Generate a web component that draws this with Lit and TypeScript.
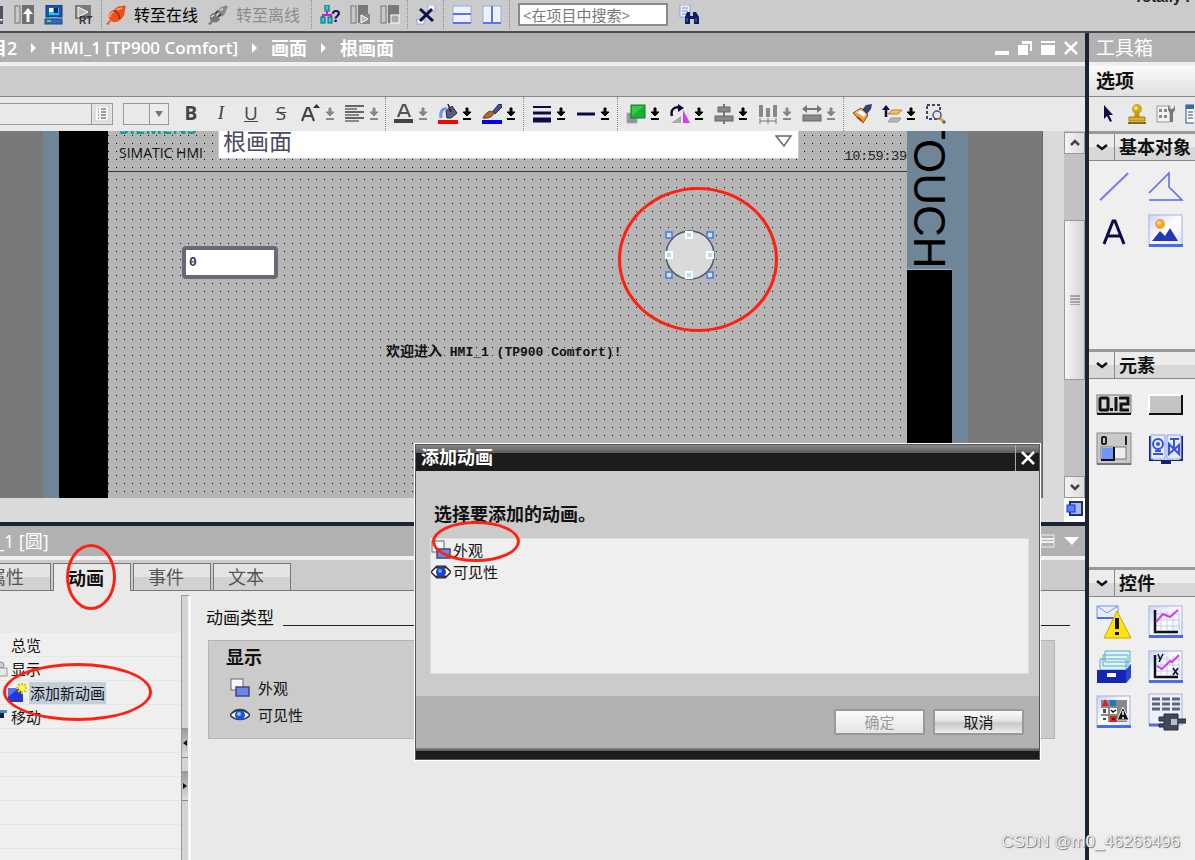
import { LitElement, html, svg, css, TemplateResult, SVGTemplateResult } from "lit";
import { customElement, property } from "lit/decorators.js";

/* ---------- icon library: every glyph is drawn in its own pixel box ---------- */
type Glyph = { w: number; h: number; art: SVGTemplateResult };
const g = (w: number, h: number, art: SVGTemplateResult): Glyph => ({ w, h, art });

const frameDefs = svg`<defs><linearGradient id="frameFill" x1="0" y1="0" x2="1" y2="1"><stop offset="0" stop-color="#c9d4fb"/><stop offset=".5" stop-color="#fff"/><stop offset="1" stop-color="#dfe6ff"/></linearGradient></defs>`;
const frame = svg`${frameDefs}<rect x="1" y="1" width="33" height="31" fill="url(#frameFill)" stroke="#a9b2dc"/><rect x="1" y="30" width="34" height="3" fill="#4f6be0"/>`;
const gridLines = svg`<path d="M13 6V25M19 6V25M25 6V25M31 6V25M7 9H32M7 15H32M7 21H32" stroke="#c3cde8"/>`;

const icons: Record<string, Glyph> = {
  sliver: g(4, 20, svg`<path d="M0 1H3V19H0Z" fill="#4a5568"/><path d="M0 14H3L1 17Z" fill="#fff"/>`),
  upload: g(20, 20, svg`<rect x="1" y="1" width="5" height="17" fill="#c8c8c8" stroke="#777"/><rect x="8" y="0" width="12" height="19" fill="#707070"/><path d="M14 3L19 9H15.500V17H12.500V9H9Z" fill="#fff"/>`),
  station: g(20, 20, svg`<rect x="2" y="0" width="16" height="12" fill="#1857b8" stroke="#123a78"/><rect x="5" y="3" width="10" height="7" fill="#18c8e8"/><rect x="5" y="3" width="4" height="4" fill="#fff"/><rect x="10" y="3" width="4" height="5" fill="#0a2470"/><rect x="6" y="12" width="8" height="2" fill="#9ab"/><rect x="1" y="14" width="17" height="5" fill="#2c68c4" stroke="#234a80"/><path d="M3 16H7" stroke="#3fe060" stroke-width="2"/>`),
  rt: g(20, 20, svg`<rect x="1" y="0" width="16" height="14" fill="#7a7a7a"/><path d="M4 2L14 7L4 12Z" fill="#b9b9b9" stroke="#fff"/><text x="5" y="19" font-family="Liberation Sans" font-weight="bold" font-size="10" fill="#333">RT</text>`),
  plug: g(20, 20, svg`<path d="M0 19L4 15C1 10 4 6 8 5L10 3C13 0 17 2 18 0L20 2C18 4 20 9 17 12L14 15C10 18 7 17 5 16L2 20Z" fill="#f0501c"/><path d="M7 6C10 6 13 9 14 14" fill="none" stroke="#a32808" stroke-width="1.500"/><path d="M4 12C4 9 6 7 8 7M11 5C13 3 15 4 16 3" fill="none" stroke="#ffb080" stroke-width="1.500"/>`),
  unplug: g(20, 20, svg`<path d="M0 19L3 16C0 12 3 8 6 8L12 14C11 17 7 18 5 17L2 20Z" fill="#777"/><path d="M9 6L12 3C14 1 17 2 18 0L20 2C18 4 18 8 16 10L14 12Z" fill="#8a8a8a"/><path d="M7 9L10 6M10 12L13 9" stroke="#444" stroke-width="2"/><path d="M3 12L6 10M12 5L15 4" stroke="#ddd" stroke-width="1.500"/>`),
  topology: g(20, 20, svg`<rect x="5" y="0" width="4" height="6" fill="#19d5d5" stroke="#067"/><path d="M7 6V10M3 13V10H11V13" fill="none" stroke="#c020d8" stroke-width="2"/><rect x="1" y="12" width="4" height="6" fill="#19d5d5" stroke="#067"/><rect x="8" y="12" width="4" height="6" fill="#19d5d5" stroke="#067"/><text x="11" y="17" font-family="Liberation Sans" font-weight="bold" font-size="16" fill="#101060">?</text>`),
  startSim: g(20, 20, svg`<rect x="1" y="1" width="5" height="17" fill="#c8c8c8" stroke="#777"/><rect x="8" y="0" width="10" height="18" fill="#7a7a7a"/><rect x="10" y="9" width="10" height="10" fill="#888"/><path d="M11 10L18 14L11 18Z" fill="#bbb" stroke="#fff"/>`),
  stopSim: g(20, 20, svg`<rect x="1" y="1" width="5" height="17" fill="#c8c8c8" stroke="#777"/><rect x="8" y="0" width="11" height="18" fill="#7a7a7a"/><rect x="11" y="10" width="8" height="8" fill="#aaa" stroke="#fff"/>`),
  crossRef: g(20, 20, svg`<rect x="12" y="0" width="7" height="6" fill="#fff" stroke="#8fa0e8"/><rect x="1" y="14" width="7" height="5" fill="#fff" stroke="#8fa0e8"/><path d="M4 4L17 16M16 4L4 16" stroke="#0b0b4a" stroke-width="3"/>`),
  splitH: g(20, 20, svg`<rect x="1" y="1" width="18" height="17" fill="#eef2ff" stroke="#9aa8ea"/><path d="M1 9H19M1 18H19" stroke="#5e73e8" stroke-width="2"/>`),
  splitV: g(20, 20, svg`<rect x="1" y="1" width="18" height="17" fill="#eef2ff" stroke="#9aa8ea"/><path d="M10 1V18M1 18H19" stroke="#5e73e8" stroke-width="2"/>`),
  find: g(20, 20, svg`<rect x="1" y="0" width="10" height="12" fill="#eef2ff" stroke="#8fa0e8"/><path d="M3 3H9M3 6H9M3 9H8" stroke="#7787cc"/><path d="M8 7H11V11H14V7H17L20 12V19H15V14H11V19H6V12Z" fill="#0d1c66"/><path d="M8 13V17M17 13V17" stroke="#5f77c8"/>`),
  listBox: g(16, 16, svg`<rect x="1" y="0" width="14" height="15" fill="#f8f8f8" stroke="#ccc"/><path d="M4 3H5M4 6H5M4 9H5M4 12H5M7 3H12M7 6H12M7 9H12M7 12H12" stroke="#444"/>`),
  fontSize: g(20, 20, svg`<path d="M1 17L6 4H8L13 17M3 12H11" fill="none" stroke="#444" stroke-width="2.200"/><path d="M12 4H19L15.500 0Z" fill="#333"/>`),
  align: g(20, 20, svg`<path d="M0 2H19M0 8H19M0 14H19" stroke="#666" stroke-width="2"/><path d="M0 5H12M0 11H14M0 17H14" stroke="#888" stroke-width="2"/>`),
  fontColor: g(20, 20, svg`<path d="M4 13L9 1H11L16 13M6 9H14" fill="none" stroke="#555" stroke-width="2.200"/><rect x="0" y="15" width="19" height="4" fill="#444"/>`),
  fill: g(20, 20, svg`<path d="M8 7L14 2L19 9L13 14H9Z" fill="#556080" stroke="#20284c"/><path d="M10 0L13 8" stroke="#222" stroke-width="1.500"/><path d="M9 5C4 4 2 8 3 14" fill="none" stroke="#6f92ee" stroke-width="3"/><rect x="0" y="16" width="20" height="4" fill="#f00"/>`),
  brush: g(20, 20, svg`<path d="M11 7L17 0H20V3L13 10Z" fill="#46508a" stroke="#222a55"/><path d="M1 14C4 8 8 6 11 8C13 11 8 15 1 14Z" fill="#b06a2c" stroke="#6a3a12"/><rect x="0" y="16" width="20" height="4" fill="#00f"/>`),
  lineWidth: g(20, 20, svg`<path d="M1 3H19" stroke="#0b0b4a" stroke-width="2"/><path d="M1 9H19" stroke="#0b0b4a" stroke-width="3"/><path d="M1 16H19" stroke="#0b0b4a" stroke-width="5"/>`),
  lineStyle: g(20, 20, svg`<path d="M1 10H19" stroke="#0b0b4a" stroke-width="3"/>`),
  order: g(20, 20, svg`<rect x="1" y="9" width="10" height="10" fill="#8b949c" stroke="#aab"/><rect x="5" y="1" width="14" height="13" fill="#1fae35" stroke="#157a28"/><path d="M6 2H18L6 12Z" fill="#35cc45"/>`),
  rotate: g(20, 20, svg`<path d="M2 12C0 5 5 2 11 4" fill="none" stroke="#0b0b4a" stroke-width="2.500"/><path d="M8 0L14 4L8 8Z" fill="#0b0b4a"/><path d="M13 6V19H20Z" fill="#d83cf0"/><path d="M11 12V19H1Z" fill="#aaa"/>`),
  centre: g(20, 20, svg`<path d="M10 0V20" stroke="#777" stroke-width="2"/><rect x="4" y="3" width="12" height="5" fill="#888" stroke="#666"/><rect x="1" y="12" width="18" height="5" fill="#888" stroke="#666"/>`),
  spread: g(20, 20, svg`<path d="M3 1V13M10 4V13M17 1V13" stroke="#888" stroke-width="4"/><path d="M2 14V20M10 14V20M18 14V20M2 17H18" stroke="#777"/>`),
  sameWidth: g(20, 20, svg`<path d="M3 5H17" stroke="#777" stroke-width="2"/><path d="M0 5L5 1V9ZM20 5L15 1V9Z" fill="#777"/><rect x="1" y="11" width="18" height="6" fill="#888" stroke="#666"/>`),
  painter: g(20, 20, svg`<path d="M10 6L14 1L20 0L19 5L15 10Z" fill="#33407a"/><path d="M1 9L9 4L16 11L11 19Z" fill="#f5a528" stroke="#8a4a10"/><path d="M4 8L9 6L14 10L12 13Z" fill="#fff" stroke="#ccc"/><path d="M5 13L10 17" stroke="#c03a08" stroke-width="2"/>`),
  layer: g(20, 20, svg`<path d="M4 13V4" stroke="#0b0b4a" stroke-width="2.500"/><path d="M0 6L4 1L8 6Z" fill="#0b0b4a"/><path d="M10 6H20L16 10H6Z" fill="#f3c05a" stroke="#b98324"/><path d="M9 14H19L16 18H6Z" fill="#b3b8bf" stroke="#999"/>`),
  zoomSel: g(20, 20, svg`<rect x="1" y="1" width="13" height="14" fill="none" stroke="#0b0b4a" stroke-dasharray="3 2" stroke-width="1.500"/><circle cx="11" cy="11" r="4" fill="#dfe8f4" stroke="#556" stroke-width="1.500"/><path d="M14 14L17 17" stroke="#e0a818" stroke-width="3"/><path d="M17 17L19 19" stroke="#2f5fae" stroke-width="3"/>`),
  minimise: g(16, 16, svg`<rect x="1" y="11" width="14" height="4" fill="#fff"/>`),
  restore: g(16, 16, svg`<path d="M5 1H15V11H13V4H5Z" fill="#fff"/><rect x="1" y="5" width="10" height="10" fill="#fff"/>`),
  maximise: g(16, 16, svg`<path d="M1 1H15V3H1ZM1 5H15V15H1Z" fill="#fff"/>`),
  close: g(16, 16, svg`<path d="M2 2L14 14M14 2L2 14" stroke="#fff" stroke-width="2.500"/>`),
  cursor: g(20, 20, svg`<path d="M6 1V15L9 12L12 18L14 17L11 11H15Z" fill="#0b0b4a"/>`),
  stamp: g(20, 20, svg`<circle cx="10" cy="5" r="5" fill="#d3a91c"/><path d="M8 8H12L13 13H7Z" fill="#c49812"/><path d="M2 13H18V17H2Z" fill="#dcb42a" stroke="#a47e0a"/><path d="M1 19H19" stroke="#8a6a08" stroke-width="2"/><circle cx="9" cy="4" r="2" fill="#f5df7a"/>`),
  settings: g(20, 20, svg`<rect x="1" y="2" width="13" height="16" fill="#f2f2f2" stroke="#999"/><path d="M3 5H6V8H3ZM8 5H11V8H8ZM3 11H6V14H3ZM8 11H11V14H8Z" fill="#888"/><path d="M12 1L14 5H17L19 1V6L17 9V18H14V9L12 6Z" fill="#777"/>`),
  panel: g(9, 20, svg`<rect x="1" y="1" width="18" height="18" fill="#fff" stroke="#2c4f9c"/><rect x="1" y="1" width="18" height="4" fill="#2f6bc0"/><path d="M3 8H8M3 11H8M3 14H8" stroke="#345"/>`),
  chevron: g(16, 16, svg`<path d="M3 6L8 10L13 6" fill="none" stroke="#111" stroke-width="2.500"/>`),
  line: g(36, 34, svg`<path d="M5 32L33 5" stroke="#bbb"/><path d="M4 31L32 4" stroke="#5468ee" stroke-width="1.500"/>`),
  polygon: g(36, 34, svg`<path d="M1 24L21 4V18L34 31H1" fill="none" stroke="#5468ee" stroke-width="1.500"/>`),
  textA: g(36, 34, svg`<path d="M8 30L17 7H19L28 30M12 22H24" fill="none" stroke="#0b0b4a" stroke-width="3"/>`),
  picture: g(36, 34, svg`${frame}<circle cx="12" cy="10" r="5" fill="#f6a623"/><circle cx="11" cy="9" r="2" fill="#fdd68a"/><path d="M4 27L12 17L17 22L22 14L30 27Z" fill="#2138b8"/>`),
  ioField: g(36, 34, svg`<rect x="1" y="8" width="34" height="18" fill="#d6d6d6" stroke="#777"/><path d="M1 27H35" stroke="#111" stroke-width="2"/><rect x="4" y="11" width="8" height="12" rx="1" fill="none" stroke="#111" stroke-width="3"/><path d="M20 10V24M23 11H32V17H25V23H33" fill="none" stroke="#111" stroke-width="3"/><rect x="14" y="21" width="3" height="3" fill="#111"/>`),
  button: g(36, 34, svg`<rect x="1" y="8" width="34" height="19" fill="#c4c4c4"/><path d="M1 27V8H35" fill="none" stroke="#fff" stroke-width="2"/><path d="M1 27H34V8" fill="none" stroke="#111" stroke-width="2"/>`),
  switchBtn: g(36, 34, svg`<rect x="1" y="1" width="34" height="31" fill="#c9c9c9" stroke="#888"/><path d="M1 32H35" stroke="#777" stroke-width="2"/><rect x="6" y="5" width="4" height="7" rx="1" fill="none" stroke="#222" stroke-width="2"/><path d="M30 4V13" stroke="#222" stroke-width="2"/><rect x="5" y="15" width="25" height="12" fill="#eee" stroke="#777"/><rect x="6" y="16" width="11" height="11" fill="#6f96ff"/><path d="M18 15V28H5" fill="none" stroke="#111" stroke-width="2"/>`),
  library: g(36, 34, svg`<path d="M1 4H5V28H31V4H35V29H23V32H13V29H1Z" fill="#14246e"/><path d="M3 3H17V27H3ZM19 3H33V27H19Z" fill="#e6ecff" stroke="#8ea0f0"/><circle cx="10" cy="12" r="5" fill="none" stroke="#3454e0" stroke-width="2"/><circle cx="10" cy="12" r="2" fill="#3454e0"/><path d="M5 22H15M7 19H13M22 7H31M26 7V16M21 12V22L31 13V22Z" fill="none" stroke="#3454e0" stroke-width="2"/>`),
  alarm: g(36, 34, svg`<rect x="1" y="1" width="21" height="12" fill="#e9eeff" stroke="#7d92e6"/><path d="M1 1L11 8L22 1" fill="none" stroke="#7d92e6"/><path d="M1 13H22" stroke="#4f6be0" stroke-width="2"/><path d="M21 6L35 33H8Z" fill="#ffe600" stroke="#c8a800"/><path d="M21 13V24M21 27V30" stroke="#111" stroke-width="4"/>`),
  trend: g(36, 34, svg`${frame}${gridLines}<path d="M7 5V27H30" fill="none" stroke="#111" stroke-width="2.500"/><path d="M8 17L15 9L22 12L30 5" fill="none" stroke="#d63be8" stroke-width="2"/>`),
  recipe: g(36, 34, svg`<path d="M9 1H34V12H9ZM7 5H32V16H7ZM4 9H30V20H4Z" fill="#dff3fa" stroke="#5fa9c8"/><path d="M1 20H30L35 14V27L30 33H1Z" fill="#1726b0"/><path d="M30 20L35 14V27L30 33Z" fill="#2f43dc"/><rect x="11" y="23" width="9" height="4" fill="#fff"/>`),
  xyTrend: g(36, 34, svg`${frame}${gridLines}<path d="M7 5V27H30" fill="none" stroke="#111" stroke-width="2.500"/><path d="M9 16L14 19L22 11L24 12L31 5" fill="none" stroke="#d63be8" stroke-width="2"/><path d="M10 4L12 9M15 4L11 12M25 18L30 25M30 18L25 25" stroke="#111" stroke-width="1.500"/>`),
  html: g(36, 34, svg`${frame}<rect x="5" y="5" width="26" height="22" fill="#888"/><path d="M6 11L9 4L13 11Z" fill="#e02020"/><rect x="14" y="5" width="6" height="6" fill="#1878c8"/><rect x="5" y="13" width="7" height="6" fill="#fff"/><rect x="14" y="13" width="7" height="6" fill="#fff"/><rect x="5" y="21" width="7" height="6" fill="#fff"/><rect x="14" y="21" width="7" height="6" fill="#e02020"/><path d="M7 15H10M7 17H10M15 15L17 17L20 15M7 24H10M16 24H19" fill="none" stroke="#111" stroke-width="1.500"/><path d="M27 12L33 25H21Z" fill="#111" stroke="#eee"/><path d="M27 16V20M27 22V24" stroke="#fff" stroke-width="1.500"/>`),
  system: g(38, 38, svg`<rect x="1" y="1" width="33" height="31" fill="#edf1ff" stroke="#a9b2dc"/><path d="M1 32H20" stroke="#4f6be0" stroke-width="3"/><path d="M4 6H32M4 11H32M4 16H32" stroke="#5b6478" stroke-width="3" stroke-dasharray="8 2"/><path d="M11 24H16V21H30V26H38V30H30V37H16V34H11V31H16V28H11Z" fill="#414a5a" stroke="#242b38"/><rect x="23" y="26" width="6" height="6" fill="#b9bfc9"/>`),
  appearance: g(20, 20, svg`<rect x="1" y="1" width="12" height="11" fill="#f6f8ff" stroke="#666"/><rect x="6" y="9" width="13" height="9" fill="#6b84f4" stroke="#444b66" stroke-width="1.500"/>`),
  eye: g(20, 20, svg`<path d="M0 10C5 4 15 4 20 10C15 16 5 16 0 10Z" fill="#fff" stroke="#333a55" stroke-width="1.500"/><circle cx="10" cy="10" r="5" fill="#2350d8"/><circle cx="9" cy="9" r="2" fill="#7fd0ff"/><path d="M3 7C7 4 13 4 17 7" fill="none" stroke="#333a55" stroke-width="2"/>`),
  eyeBold: g(20, 20, svg`<path d="M0 10L5 5H15L20 10L15 15H5Z" fill="#fff" stroke="#222" stroke-width="1.500"/><path d="M5 5H15M5 15H15" stroke="#333" stroke-width="3"/><circle cx="10" cy="10" r="5" fill="#2040c8"/><circle cx="9" cy="9" r="2" fill="#4fb0ff"/>`),
  newItem: g(20, 20, svg`<rect x="1" y="5" width="15" height="14" fill="#2438d8"/><path d="M1 5H12L1 14Z" fill="#5a74f8"/><path d="M15 0V11M9 5H20M11 1L19 9M19 1L11 9" stroke="#d8c800" stroke-width="2"/><circle cx="15" cy="5" r="3" fill="#fff85a"/>`),
  group: g(8, 20, svg`<circle cx="1" cy="6" r="3" fill="#ccd" stroke="#88a"/><rect x="-4" y="9" width="11" height="8" fill="#e8e8e8" stroke="#999"/>`),
  move: g(8, 20, svg`<rect x="0" y="3" width="7" height="3" fill="#3f8fb8"/><path d="M0 6H4V11H0Z" fill="#0b1c50"/>`),
  layout: g(20, 20, svg`<rect x="6" y="2" width="12" height="13" fill="#a9b9e0" stroke="#1c2f80" stroke-width="2"/><rect x="3" y="5" width="8" height="7" fill="#5b80ff" stroke="#1030e0"/>`),
  scrollUp: g(16, 16, svg`<path d="M4 10L8 6L12 10" fill="none" stroke="#444" stroke-width="2.500"/>`),
  scrollDown: g(16, 16, svg`<path d="M4 6L8 10L12 6" fill="none" stroke="#444" stroke-width="2.500"/>`),
  rows: g(16, 16, svg`<rect x="1" y="2" width="13" height="12" fill="none" stroke="#eee"/><path d="M1 6H14M1 9H14" stroke="#eee" stroke-width="2"/>`),
  triangle: g(16, 16, svg`<path d="M0 4H15L8 12Z" fill="#fff"/>`),
};

const icon = (name: string): TemplateResult => {
  const i = icons[name];
  return html`<svg width=${i.w} height=${i.h} viewBox="0 0 ${i.w} ${i.h}" aria-hidden="true">${i.art}</svg>`;
};

const shared = css`
  * { box-sizing: border-box; }
  svg { display: block; flex: none; }
  button { border: 0; padding: 0; margin: 0; background: none; font: inherit; color: inherit; display: flex; align-items: center; flex: none; }
  .group { display: flex; align-items: center; gap: 10px; height: 100%; padding: 0 7px 0 8px; flex: none; }
  .group + .group { border-left: 1px dotted #888; }
  .titlebar { height: 29px; background: #b1b1b1; color: #fff; display: flex; align-items: center; flex: none; white-space: nowrap; }
  .stripe { height: 4px; background: #f0f0f0; flex: none; }
`;

@customElement("top-toolbar")
class TopToolbar extends LitElement {
  static styles = [shared, css`
    :host { display: flex; height: 33px; background: #cbcbcb; border-bottom: 2px solid #4a4c5c; overflow: hidden; position: relative; font-size: 16px; padding-bottom: 2px; line-height: 24px; }
    .group:first-child { padding-left: 0; }
    .group.online { padding-left: 4px; padding-right: 11px; }
    .go { gap: 8px; }
    .off { color: #8c8c8c; }
    input { width: 150px; height: 23px; border: 2px solid #8a8a8a; background: #fff; padding: 0 3px; font: inherit; font-size: 15px; color: #777; }
    input::placeholder { color: #777; opacity: 1; }
    .search { gap: 11px; }
    .brand { position: absolute; right: 0; top: -12px; width: 61px; font: bold 15px/18px "Liberation Sans", sans-serif; white-space: nowrap; color: #222; }
  `];
  render() {
    const b = (n: string, label: string) => html`<button aria-label=${label}>${icon(n)}</button>`;
    return html`
      <div class="group">${icon("sliver")}${b("upload", "上传")}${b("station", "下载")}${b("rt", "启动 RT")}</div>
      <div class="group online"><button class="go">${icon("plug")}<span>转至在线</span></button><button class="go off" disabled>${icon("unplug")}<span>转至离线</span></button></div>
      <div class="group">${b("topology", "可访问设备")}${b("startSim", "启动")}${b("stopSim", "停止")}</div>
      <div class="group">${b("crossRef", "交叉引用")}</div>
      <div class="group">${b("splitH", "水平拆分")}${b("splitV", "垂直拆分")}</div>
      <div class="group search"><input type="text" aria-label="在项目中搜索" placeholder="<在项目中搜索>">${b("find", "搜索")}</div>
      <span class="brand">Totally I</span>`;
  }
}

@customElement("format-bar")
class FormatBar extends LitElement {
  static styles = [shared, css`
    :host { display: flex; height: 34px; background: #e9e9e9; flex: none; font-family: "Open Sans", sans-serif; }
    .group:first-child { padding-left: 0; padding-right: 6px; }
    .family { display: flex; width: 113px; height: 22px; border: 1px solid #999; border-left: 0; }
    .family input { flex: 1; min-width: 0; border: 0; border-right: 1px solid #999; background: #e9e9e9; padding: 0; }
    .family button { width: 20px; justify-content: center; background: #e4e4e4; }
    .size { width: 46px; height: 22px; appearance: none; border: 1px solid #999; border-radius: 0; background: linear-gradient(90deg, #999 1px, #ececec 1px) right / 19px 100% no-repeat; margin-right: 2px; }
    .sizewrap { position: relative; flex: none; display: flex; }
    .sizewrap svg { position: absolute; right: 8px; top: 8px; }
    .letter { width: 20px; height: 24px; justify-content: center; font-size: 19px; line-height: 22px; padding-bottom: 2px; color: #444; }
    .bold { font-weight: 700; }
    .italic { font-family: "Liberation Serif", serif; font-style: italic; }
    .under { text-decoration: underline; }
    .strike { text-decoration: line-through; }
    .pair { gap: 4px; }
    .dim { color: #888; }
  `];
  pair(name: string, label: string, dim = false) {
    return html`<button class="pair ${dim ? "dim" : ""}" aria-label=${label}>${icon(name)}<svg width="10" height="14" viewBox="0 0 10 14"><path d="M4 1H6V5H9L5 9L1 5H4Z" fill="currentColor" stroke="currentColor"/><path d="M1 12H9" stroke="currentColor" stroke-width="2"/></svg></button>`;
  }
  render() {
    return html`
      <div class="group">
        <div class="family"><input type="text" aria-label="字体"><button aria-label="选择字体">${icon("listBox")}</button></div>
        <div class="sizewrap"><select class="size" aria-label="字号"></select><svg width="8" height="6" viewBox="0 0 8 6"><path d="M0 0H8L4 6Z" fill="#777"/></svg></div>
        <button class="letter bold">B</button><button class="letter italic">I</button><button class="letter under">U</button><button class="letter strike">S</button>
        ${this.pair("fontSize", "字体大小", true)}${this.pair("align", "对齐", true)}
      </div>
      <div class="group">${this.pair("fontColor", "文本颜色", true)}${this.pair("fill", "背景色")}${this.pair("brush", "边框颜色")}</div>
      <div class="group">${this.pair("lineWidth", "线宽")}${this.pair("lineStyle", "线型")}</div>
      <div class="group">${this.pair("order", "次序")}${this.pair("rotate", "旋转")}${this.pair("centre", "居中")}${this.pair("spread", "分布", true)}${this.pair("sameWidth", "等宽", true)}</div>
      <div class="group"><button aria-label="格式刷">${icon("painter")}</button>${this.pair("layer", "图层")}<button aria-label="缩放所选">${icon("zoomSel")}</button></div>`;
  }
}

@customElement("screen-editor")
class ScreenEditor extends LitElement {
  static styles = [shared, css`
    :host { display: flex; flex: 1; min-height: 0; background: #797979; overflow: hidden; }
    .desk { width: 43px; flex: none; }
    .edge { width: 16px; background: #6f8699; flex: none; }
    .bezel { width: 49px; background: #000; flex: none; }
    .bezel.right { width: 45px; position: relative; overflow: hidden; }
    .touch { position: absolute; left: 0; top: 0; width: 45px; height: 139px; background: #6f8699; border-bottom: 1px solid #9db0c0; writing-mode: vertical-rl; font: 44px/45px "Liberation Sans", sans-serif; white-space: nowrap; display: flex; justify-content: flex-end; color: #000; }
    .screen { flex: 1; background: #b5b5b5; position: relative; overflow: hidden; min-width: 0; }
    .grid { position: absolute; inset: 0; width: 100%; height: 100%; }
    .brand { position: absolute; left: 11px; top: -14px; font: bold 18px/20px "Open Sans", sans-serif; color: #0f9c9c; }
    .model { position: absolute; left: 11px; top: 12px; font: 14px/20px "Open Sans", sans-serif; color: #111; white-space: nowrap; }
    .title { position: absolute; left: 110px; right: 108px; top: -8px; height: 36px; background: #fff; border: 1px solid #c9c9d6; padding: 0 5px 0 4px; font-size: 23px; line-height: 24px; color: #4a4a60; display: flex; justify-content: space-between; align-items: center; white-space: nowrap; }
    .date { position: absolute; right: 2px; top: -11px; font: 13px/16px "Liberation Mono", monospace; color: #222; white-space: nowrap; }
    .time { position: absolute; right: 0; top: 18px; font: 13px/16px "Liberation Mono", monospace; color: #222; white-space: nowrap; }
    .io { position: absolute; left: 74px; top: 115px; width: 96px; height: 33px; border: 4px solid #686877; border-radius: 4px; background: #fff; padding: 0 3px; font: bold 13px/20px "Liberation Mono", monospace; color: #333350; }
    .welcome { position: absolute; left: 278px; top: 209px; font: bold 13px/20px "Liberation Mono", monospace; color: #111; white-space: nowrap; }
    .welcome .zh { font-family: "Noto Sans CJK SC", sans-serif; font-size: 14px; }
    .shape { position: absolute; left: 551px; top: 97px; }
    .ring { position: absolute; left: 510px; top: 56px; width: 160px; height: 145px; border: 3px solid #ff2010; border-radius: 50%; }
    .gap { width: 75px; flex: none; border-right: 1px solid #686868; }
    .side { width: 21px; background: #d9d9d9; flex: none; }
    .scroll { width: 21px; background: #c2c2c2; display: flex; flex-direction: column; flex: none; padding-top: 1px; }
    .scroll button { width: 21px; height: 22px; border: 1px solid #999; background: linear-gradient(90deg, #f4f4f4, #ddd); justify-content: center; }
    .scroll .up { flex: 67; display: block; }
    .thumb { flex: 160; border: 1px solid #999; background: linear-gradient(90deg, #f4f4f4, #d4d4d4); display: flex; align-items: center; justify-content: center; }
    .down { flex: 97; }
  `];
  render() {
    const corners = [[10, 7], [51, 7], [10, 47], [51, 47]];
    const mids = [[30, 7], [10, 27], [51, 27], [30, 47]];
    return html`
      <div class="desk"></div><div class="edge"></div><div class="bezel"></div>
      <div class="screen">
        <svg class="grid">
          <defs>
            <pattern id="dots" width="8" height="8" patternUnits="userSpaceOnUse"><rect width="1" height="1" fill="#111"/></pattern>
            <pattern id="headDots" y="4" width="8" height="8" patternUnits="userSpaceOnUse"><rect width="1" height="1" fill="#111"/></pattern>
          </defs>
          <rect width="100%" height="40" fill="url(#headDots)"/>
          <rect y="42" width="100%" height="100%" fill="url(#dots)"/>
          <rect y="40" width="100%" height="1" fill="#333"/>
        </svg>
        <span class="brand">SIEMENS</span>
        <span class="model">SIMATIC HMI</span>
        <div class="title"><span>根画面</span><svg width="18" height="12" viewBox="0 0 18 12"><path d="M1 1H16L9 11Z" fill="none" stroke="#686877" stroke-width="1.500"/></svg></div>
        <span class="date">2000/12/31</span>
        <span class="time">10:59:39</span>
        <input class="io" type="text" aria-label="I/O 域" value="0">
        <span class="welcome"><span class="zh">欢迎进入</span> HMI_1 (TP900 Comfort)!</span>
        <svg class="shape" width="62" height="56" viewBox="0 0 62 56">
          <circle cx="31" cy="27" r="24" fill="#dadada" stroke="#555566" stroke-width="1.500"/>
          ${corners.map(([x, y]) => svg`<rect x=${x - 3} y=${y - 3} width="6" height="6" fill="#bfe4fb" stroke="#4a78d0" stroke-width="1.500"/>`)}
          ${mids.map(([x, y]) => svg`<rect x=${x - 3} y=${y - 3} width="6" height="6" fill="#aee0fa" stroke="#fff" stroke-width="2"/>`)}
        </svg>
        <div class="ring"></div>
      </div>
      <div class="bezel right"><div class="touch">TOUCH</div></div>
      <div class="edge"></div><div class="gap"></div><div class="side"></div>
      <div class="scroll">
        <button aria-label="向上滚动">${icon("scrollUp")}</button><span class="up"></span>
        <div class="thumb"><svg width="10" height="10" viewBox="0 0 10 10"><path d="M0 1H10M0 4H10M0 7H10M0 10H10" stroke="#666"/></svg></div>
        <span class="down"></span><button aria-label="向下滚动">${icon("scrollDown")}</button>
      </div>`;
  }
}

@customElement("inspector-panel")
class InspectorPanel extends LitElement {
  static styles = [shared, css`
    :host { display: flex; flex-direction: column; height: 338px; flex: none; border-top: 4px solid #1c2333; background: #e9e9e9; }
    .titlebar { height: 30px; font-size: 18px; line-height: 28px; padding-right: 5px; gap: 8px; }
    .name { flex: 1; margin-left: -4px; }
    .tabs { height: 31px; background: #cbcbcb; border-bottom: 1px solid #777; display: flex; align-items: flex-end; gap: 2px; flex: none; }
    .tab { width: 78px; height: 27px; border: 1px solid #777; border-bottom: 0; background: linear-gradient(#e4e4e4 50%, #d2d2d2 50%); justify-content: center; padding-right: 12px; font-size: 18px; line-height: 26px; color: #555; position: relative; }
    .tab.cut { width: 51px; border-left: 0; justify-content: flex-end; padding-right: 26px; white-space: nowrap; }
    .tab.on { background: #e9e9e9; color: #111; font-weight: 700; height: 28px; margin-bottom: -1px; }
    .ring { position: absolute; border: 3px solid #ff2010; border-radius: 50%; pointer-events: none; }
    .tab .ring { left: 12px; top: -20px; width: 50px; height: 66px; z-index: 2; }
    .body { flex: 1; display: flex; min-height: 0; }
    .list { width: 181px; flex: none; margin: 42px 0 0; padding: 0; list-style: none; background: #efefef; font-size: 15px; line-height: 22px; color: #111; overflow: hidden; }
    .wrap { position: relative; flex: none; width: 181px; display: flex; }
    .wrap .ring { left: 3px; top: 72px; width: 149px; height: 58px; }
    li { height: 24px; border-bottom: 1px solid #e6e6e6; display: flex; align-items: center; gap: 3px; white-space: nowrap; }
    li .pad { width: 8px; flex: none; }
    li.sub { padding-left: 7px; gap: 2px; }
    li.sub span { background: #c3cedb; padding: 0 1px; }
    .split { width: 10px; margin-top: 4px; flex: none; background: #d4d4d4; border: 1px solid #999; border-right: 3px solid #f6f6f6; border-bottom: 0; padding-top: 132px; display: flex; flex-direction: column; gap: 13px; }
    .split button { width: 6px; height: 30px; background: linear-gradient(#999, #ddd); border-bottom: 1px solid #888; }
    .types { flex: 1; min-width: 0; padding: 14px 15px 0 15px; color: #111; }
    .head { display: flex; align-items: center; gap: 9px; font-size: 17px; line-height: 26px; white-space: nowrap; }
    .head i { flex: 1; height: 1px; background: #222; margin-top: 14px; }
    .box { margin: 9px 15px 0 2px; height: 99px; background: #cbcbcb; border: 1px solid #b5b5b5; padding: 2px 17px; }
    .box h3 { margin: 0; font-size: 18px; line-height: 28px; font-weight: 700; }
    .kind { display: flex; align-items: center; gap: 8px; height: 27px; padding-left: 4px; font-size: 15px; line-height: 24px; white-space: nowrap; }
    .kind.first { margin-top: 3px; }
  `];
  render() {
    return html`
      <div class="titlebar"><span class="name">_1 [圆]</span>${icon("rows")}${icon("triangle")}</div>
      <div class="stripe"></div>
      <div class="tabs">
        <button class="tab cut">属性</button>
        <button class="tab on">动画<span class="ring"></span></button>
        <button class="tab">事件</button><button class="tab">文本</button>
      </div>
      <div class="body">
        <div class="wrap"><ul class="list">
          <li><span class="pad"></span><span>总览</span></li>
          <li>${icon("group")}<span>显示</span></li>
          <li class="sub">${icon("newItem")}<span>添加新动画</span></li>
          <li>${icon("move")}<span>移动</span></li>
          <li></li><li></li><li></li><li></li><li></li>
        </ul><span class="ring"></span></div>
        <div class="split">
          <button aria-label="折叠"><svg width="6" height="8" viewBox="0 0 6 8"><path d="M5 1V7L1 4Z" fill="#111"/></svg></button>
          <button aria-label="展开"><svg width="6" height="8" viewBox="0 0 6 8"><path d="M1 1V7L5 4Z" fill="#111"/></svg></button>
        </div>
        <div class="types">
          <div class="head"><span>动画类型</span><i></i></div>
          <div class="box"><h3>显示</h3>
            <div class="kind first">${icon("appearance")}<span>外观</span></div>
            <div class="kind">${icon("eye")}<span>可见性</span></div>
          </div>
        </div>
      </div>`;
  }
}

@customElement("tool-section")
class ToolSection extends LitElement {
  @property() heading = "";
  @property({ attribute: false }) items: string[] = [];
  static styles = [shared, css`
    :host { display: block; border-top: 3px solid #999; }
    .head { width: 100%; height: 27px; background: linear-gradient(#ececec 50%, #d8d8d8 50%); border-bottom: 1px solid #888; font-size: 18px; line-height: 26px; font-weight: 700; color: #111; white-space: nowrap; }
    .mark { width: 26px; height: 100%; border-right: 1px solid #888; display: flex; align-items: center; justify-content: center; flex: none; }
    .label { padding-left: 4px; }
    .items { display: grid; grid-template-columns: 36px 36px; column-gap: 16px; row-gap: 11px; grid-auto-rows: 34px; padding: 8px 0 0 7px; align-items: center; min-height: 188px; align-content: start; }
  `];
  render() {
    return html`<button class="head"><span class="mark">${icon("chevron")}</span><span class="label">${this.heading}</span></button>
      <div class="items">${this.items.map((n) => html`<button aria-label=${n}>${icon(n)}</button>`)}</div>`;
  }
}

@customElement("tool-box")
class ToolBox extends LitElement {
  static styles = [shared, css`
    :host { display: flex; flex-direction: column; width: 110px; flex: none; border-left: 4px solid #1c2333; background: #efefef; overflow: hidden; }
    .titlebar { padding-left: 7px; font-size: 19px; line-height: 28px; }
    .options { height: 31px; background: linear-gradient(#fafafa, #e0e0e0); border-bottom: 1px solid #888; padding-left: 7px; font-size: 19px; line-height: 30px; font-weight: 700; color: #111; flex: none; }
    .tools { height: 34px; background: #e9e9e9; display: flex; align-items: center; gap: 9px; padding-left: 9px; flex: none; }
  `];
  render() {
    return html`
      <div class="titlebar">工具箱</div><div class="stripe"></div>
      <div class="options">选项</div>
      <div class="tools">${["cursor", "stamp", "settings", "panel"].map((n) => html`<button aria-label=${n}>${icon(n)}</button>`)}</div>
      <tool-section heading="基本对象" .items=${["line", "polygon", "textA", "picture"]}></tool-section>
      <tool-section heading="元素" .items=${["ioField", "button", "switchBtn", "library"]}></tool-section>
      <tool-section heading="控件" .items=${["alarm", "trend", "recipe", "xyTrend", "html", "system"]}></tool-section>`;
  }
}

@customElement("animation-dialog")
class AnimationDialog extends LitElement {
  static styles = [shared, css`
    :host { position: absolute; left: 414px; top: 443px; width: 627px; background: #cbcbcb; border: 1px solid #fff; color: #111; }
    .frame { border: 1px solid #555; }
    .bar { height: 26px; background: linear-gradient(#8a8a8a, #5c5c5c 8px, #1c1c1c 8px); color: #fff; display: flex; align-items: center; justify-content: space-between; padding-left: 5px; font-size: 18px; line-height: 24px; font-weight: 700; white-space: nowrap; }
    .bar span { padding-bottom: 2px; }
    .bar button { width: 24px; height: 100%; border-left: 1px solid #aaa; justify-content: center; }
    .content { padding: 28px 10px 22px 14px; position: relative; }
    .prompt { margin: 0; padding-left: 4px; font-size: 18px; line-height: 30px; font-weight: 700; }
    .list { margin: 9px 0 0; padding: 0; list-style: none; height: 136px; background: #efefef; border: 1px solid #ddd; font-size: 15px; line-height: 20px; }
    li { display: flex; align-items: center; gap: 2px; height: 22px; }
    .ring { position: absolute; left: 16px; top: 50px; width: 88px; height: 41px; border: 3px solid #ff2010; border-radius: 50%; pointer-events: none; }
    .foot { height: 52px; background: #b1b1b1; display: flex; justify-content: flex-end; align-items: center; gap: 8px; padding-right: 15px; }
    .foot button { width: 91px; height: 26px; border: 2px solid #999; border-radius: 2px; background: linear-gradient(#fafafa, #e4e4e4 45%, #c8c8c8 55%, #ececec); justify-content: center; font-size: 15px; line-height: 22px; }
    .foot button:disabled { background: linear-gradient(#fafafa, #e4e4e4); color: #999; }
    .base { height: 11px; background: linear-gradient(#888, #555 3px, #1c1c1c 3px); }
  `];
  render() {
    return html`<div class="frame" role="dialog" aria-label="添加动画">
      <div class="bar"><span>添加动画</span><button aria-label="关闭">${icon("close")}</button></div>
      <div class="content">
        <p class="prompt">选择要添加的动画。</p>
        <ul class="list"><li>${icon("appearance")}<span>外观</span></li><li>${icon("eyeBold")}<span>可见性</span></li></ul>
        <span class="ring"></span>
      </div>
      <div class="foot"><button disabled>确定</button><button>取消</button></div>
      <div class="base"></div>
    </div>`;
  }
}

@customElement("app-root")
class AppRoot extends LitElement {
  static styles = [shared, css`
    :host { display: flex; flex-direction: column; height: 100vh; position: relative; overflow: hidden; font-family: "Open Sans", "Noto Sans CJK SC", sans-serif; background: #e9e9e9; }
    .work { flex: 1; display: flex; min-height: 0; }
    .main { flex: 1; min-width: 0; display: flex; flex-direction: column; }
    .crumbs { flex: 1; display: flex; align-items: center; gap: 14px; font-size: 18px; line-height: 28px; font-weight: 600; margin-left: -11px; }
    .crumbs .lat { font-size: 17px; }
    .wins { display: flex; gap: 7px; padding-right: 6px; }
    .band { height: 31px; background: #cbcbcb; border-bottom: 1px solid #888; flex: none; }
    .status { height: 24px; background: #dadada; display: flex; justify-content: flex-end; flex: none; }
    .status span { width: 21px; background: #fff; display: flex; align-items: center; justify-content: flex-end; padding-right: 1px; }
    .mark { position: absolute; right: 15px; bottom: 8px; font: 17px/20px "Liberation Sans", sans-serif; color: #f4f4f4; text-shadow: 1px 1px 1px #777, 0 0 1px #888; white-space: nowrap; }
  `];
  render() {
    const arrow = html`<svg width="5" height="10" viewBox="0 0 5 10"><path d="M0 0L5 5L0 10Z" fill="#fff"/></svg>`;
    return html`
      <top-toolbar></top-toolbar>
      <div class="work">
        <div class="main">
          <div class="titlebar">
            <div class="crumbs"><span>目2</span>${arrow}<span class="lat">HMI_1 [TP900 Comfort]</span>${arrow}<span>画面</span>${arrow}<span>根画面</span></div>
            <div class="wins">${["minimise", "restore", "maximise", "close"].map((n) => html`<button aria-label=${n}>${icon(n)}</button>`)}</div>
          </div>
          <div class="stripe"></div><div class="band"></div>
          <format-bar></format-bar>
          <screen-editor></screen-editor>
          <div class="status"><span>${icon("layout")}</span></div>
          <inspector-panel></inspector-panel>
        </div>
        <tool-box></tool-box>
      </div>
      <animation-dialog></animation-dialog>
      <div class="mark">CSDN @m0_46266496</div>`;
  }
}
